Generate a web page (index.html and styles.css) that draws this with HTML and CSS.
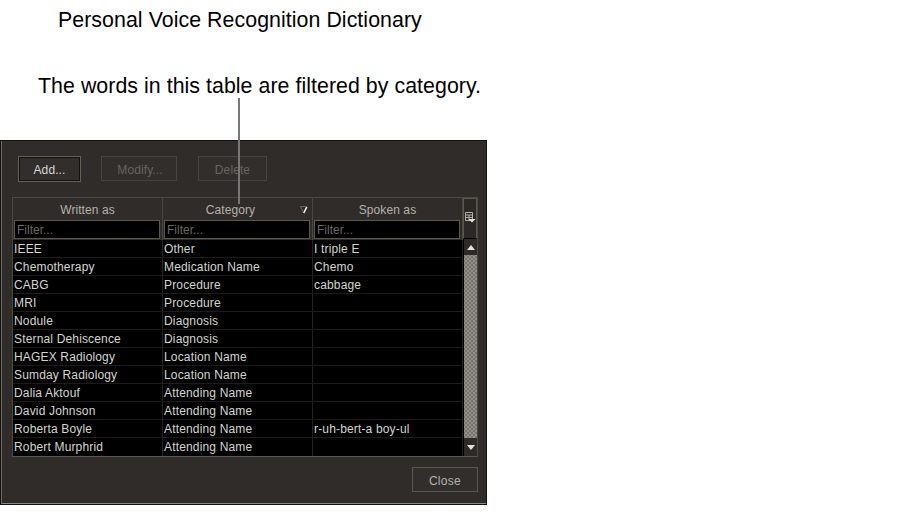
FILE: index.html
```html
<!DOCTYPE html>
<html lang="en">
<head>
    <meta charset="UTF-8">
    <title>Personal Voice Recognition Dictionary</title>
    <link rel="stylesheet" href="styles.css">
</head>
<body>
    <h1 class="page-title">Personal Voice Recognition Dictionary</h1>
    <p class="callout">The words in this table are filtered by category.</p>

    <div class="dialog">
        <div class="toolbar">
            <button class="btn btn-default">Add...</button>
            <button class="btn btn-modify" disabled>Modify...</button>
            <button class="btn btn-delete" disabled>Delete</button>
        </div>

        <div class="table-frame">
            <div class="table-side">
                <div class="head-row">
                    <div class="head-cell">Written as</div>
                    <div class="head-cell head-cell-filtered">Category
                        <svg class="filter-mark" width="9" height="8" viewBox="0 0 9 8">
                            <path d="M0.5 0.5H6.5L3.5 7Z" fill="none" stroke="#6b665e"/>
                            <path d="M6.8 1L3.8 7" stroke="#fff" stroke-width="1.4"/>
                        </svg>
                    </div>
                    <div class="head-cell">Spoken as</div>
                </div>
                <div class="filter-row">
                    <div class="filter-cell"><input class="filter-input" placeholder="Filter..."></div>
                    <div class="filter-cell"><input class="filter-input" placeholder="Filter..."></div>
                    <div class="filter-cell"><input class="filter-input" placeholder="Filter..."></div>
                </div>
                <div class="rows" id="rows"></div>
            </div>

            <div class="scroll-side">
                <div class="column-picker">
                    <svg width="11" height="11" viewBox="0 0 11 11">
                        <path d="M0.5 0.5H7.5V8.5H0.5ZM0.5 3H7.5M4 3V8.5M0.5 5.5H7.5" fill="none" stroke="#b5b1a6"/>
                        <path d="M3.5 7H10.5L7 10.5Z" fill="#e4e1da"/>
                    </svg>
                </div>
                <div class="scrollbar">
                    <div class="scroll-btn"><div class="arrow-up"></div></div>
                    <div class="scroll-thumb"></div>
                    <div class="scroll-btn scroll-btn-down"><div class="arrow-down"></div></div>
                </div>
            </div>
        </div>

        <div class="dialog-footer">
            <button class="btn btn-close">Close</button>
        </div>
    </div>

    <div class="leader-line"></div>

    <script>
        const words = [
            ["IEEE", "Other", "I triple E"],
            ["Chemotherapy", "Medication Name", "Chemo"],
            ["CABG", "Procedure", "cabbage"],
            ["MRI", "Procedure", ""],
            ["Nodule", "Diagnosis", ""],
            ["Sternal Dehiscence", "Diagnosis", ""],
            ["HAGEX Radiology", "Location Name", ""],
            ["Sumday Radiology", "Location Name", ""],
            ["Dalia Aktouf", "Attending Name", ""],
            ["David Johnson", "Attending Name", ""],
            ["Roberta Boyle", "Attending Name", "r-uh-bert-a boy-ul"],
            ["Robert Murphrid", "Attending Name", ""]
        ];

        const rowsElement = document.getElementById('rows');
        words.forEach(word => {
            const row = document.createElement('div');
            row.className = 'row';
            word.forEach(text => {
                const cell = document.createElement('div');
                cell.className = 'cell';
                cell.textContent = text;
                row.appendChild(cell);
            });
            rowsElement.appendChild(row);
        });
    </script>
</body>
</html>
```

FILE: styles.css
```css
* {
    margin: 0;
    padding: 0;
    box-sizing: border-box;
    font-family: "Liberation Sans", Arial, sans-serif;
}

body {
    background: #fff;
    width: 900px;
    height: 515px;
    position: relative;
    overflow: hidden;
    color: #000;
}

.page-title {
    font-size: 21.33px;
    font-weight: normal;
    line-height: 23px;
    letter-spacing: 0.06px;
    padding: 9px 0 0 58px;
}

.callout {
    font-size: 21.33px;
    line-height: 23px;
    letter-spacing: 0.05px;
    padding: 43px 0 0 38px;
}

/* points from the caption to the Category column */
.leader-line {
    position: absolute;
    left: 238px;
    top: 98px;
    width: 2px;
    height: 106px;
    background: #777;
}

.dialog {
    margin-top: 42px;
    width: 487px;
    height: 365px;
    background: #302c29;
    border-top: 1px solid #111;
    border-right: 1px solid #111;
    border-bottom: 1px solid #111;
    box-shadow: inset 1px 0 0 #111, inset 2px 0 0 #6f6b64, inset 0 -1px 0 #8a8780;
    padding: 15px 8px 0 12px;
    display: flex;
    flex-direction: column;
}

.toolbar {
    display: flex;
    padding-left: 6px;
    height: 41px;
    align-items: flex-start;
}

.btn {
    height: 25px;
    background: #322e2b;
    border: 1px solid #47433d;
    color: #c6c4be;
    font-size: 12px;
    letter-spacing: 0.1px;
    padding-top: 2px;
}

.btn:disabled {
    color: #69655f;
}

.btn-default {
    width: 63px;
    height: 26px;
    color: #d8d6d0;
    border: 1px solid #6a6050;
    box-shadow: inset 0 0 0 1px #111;
    margin-right: 20px;
}

.btn-modify {
    width: 76px;
    margin-right: 21px;
    padding-left: 2px;
}

.btn-delete {
    width: 69px;
}

.table-frame {
    display: flex;
    width: 466px;
    height: 260px;
    border: 1px solid #4d483f;
    border-bottom-color: #5c574d;
    background: #000;
}

.table-side {
    width: 450px;
    flex: none;
}

.head-row,
.filter-row,
.row {
    display: grid;
    grid-template-columns: 150px 150px 150px;
}

.head-row {
    height: 22px;
    background: #302c29;
}

.head-cell {
    position: relative;
    border-right: 1px solid #4d483f;
    color: #b4b2ab;
    font-size: 12px;
    letter-spacing: 0.08px;
    line-height: 24px;
    text-align: center;
}

.head-cell-filtered {
    padding-right: 14px;
}

.filter-mark {
    position: absolute;
    right: 3px;
    top: 8px;
}

.filter-row {
    height: 20px;
    background: #302c29;
}

.filter-cell {
    padding: 0 2px 1px 1px;
    border-right: 1px solid #4d483f;
}

.filter-input {
    display: block;
    width: 100%;
    height: 19px;
    background: #000;
    border: 1px solid #5c574d;
    color: #6b6862;
    font-size: 12px;
    padding-left: 2px;
    outline: none;
}

.filter-input::placeholder {
    color: #6b6862;
    opacity: 1;
}

.row {
    height: 18px;
    border-bottom: 1px solid #1f1c18;
}

.row:last-child {
    border-bottom: none;
}

.cell {
    border-right: 1px solid #26231f;
    color: #d4d4d0;
    font-size: 12px;
    letter-spacing: 0.16px;
    line-height: 17px;
    padding: 1px 0 0 1px;
    white-space: nowrap;
    overflow: hidden;
}

.scroll-side {
    flex: 1;
    background: #302c29;
    display: flex;
    flex-direction: column;
}

.column-picker {
    height: 41px;
    border: 1px solid #5c574d;
    border-bottom-color: #000;
    background: #2b2825;
    display: flex;
    align-items: center;
    justify-content: center;
    padding-bottom: 3px;
}

.scrollbar {
    flex: 1;
    display: flex;
    flex-direction: column;
    background: #000;
    padding-left: 1px;
}

.scroll-btn {
    height: 16px;
    background: #2d2a27;
    display: flex;
    align-items: center;
    justify-content: center;
}

.scroll-btn-down {
    height: 18px;
}

.arrow-up {
    border-left: 4px solid transparent;
    border-right: 4px solid transparent;
    border-bottom: 5px solid #e4e2dd;
}

.arrow-down {
    border-left: 4px solid transparent;
    border-right: 4px solid transparent;
    border-top: 5px solid #e4e2dd;
}

.scroll-thumb {
    flex: 1;
    background-color: #767369;
    background-image:
        radial-gradient(#93908a 0.8px, transparent 1px),
        radial-gradient(#93908a 0.8px, transparent 1px);
    background-size: 4px 4px;
    background-position: 0 0, 2px 2px;
}

.dialog-footer {
    display: flex;
    justify-content: flex-end;
    padding-top: 10px;
}

.btn-close {
    width: 66px;
    color: #b4b2ab;
    border: 1px solid #5c574d;
    letter-spacing: 0.3px;
}
```
